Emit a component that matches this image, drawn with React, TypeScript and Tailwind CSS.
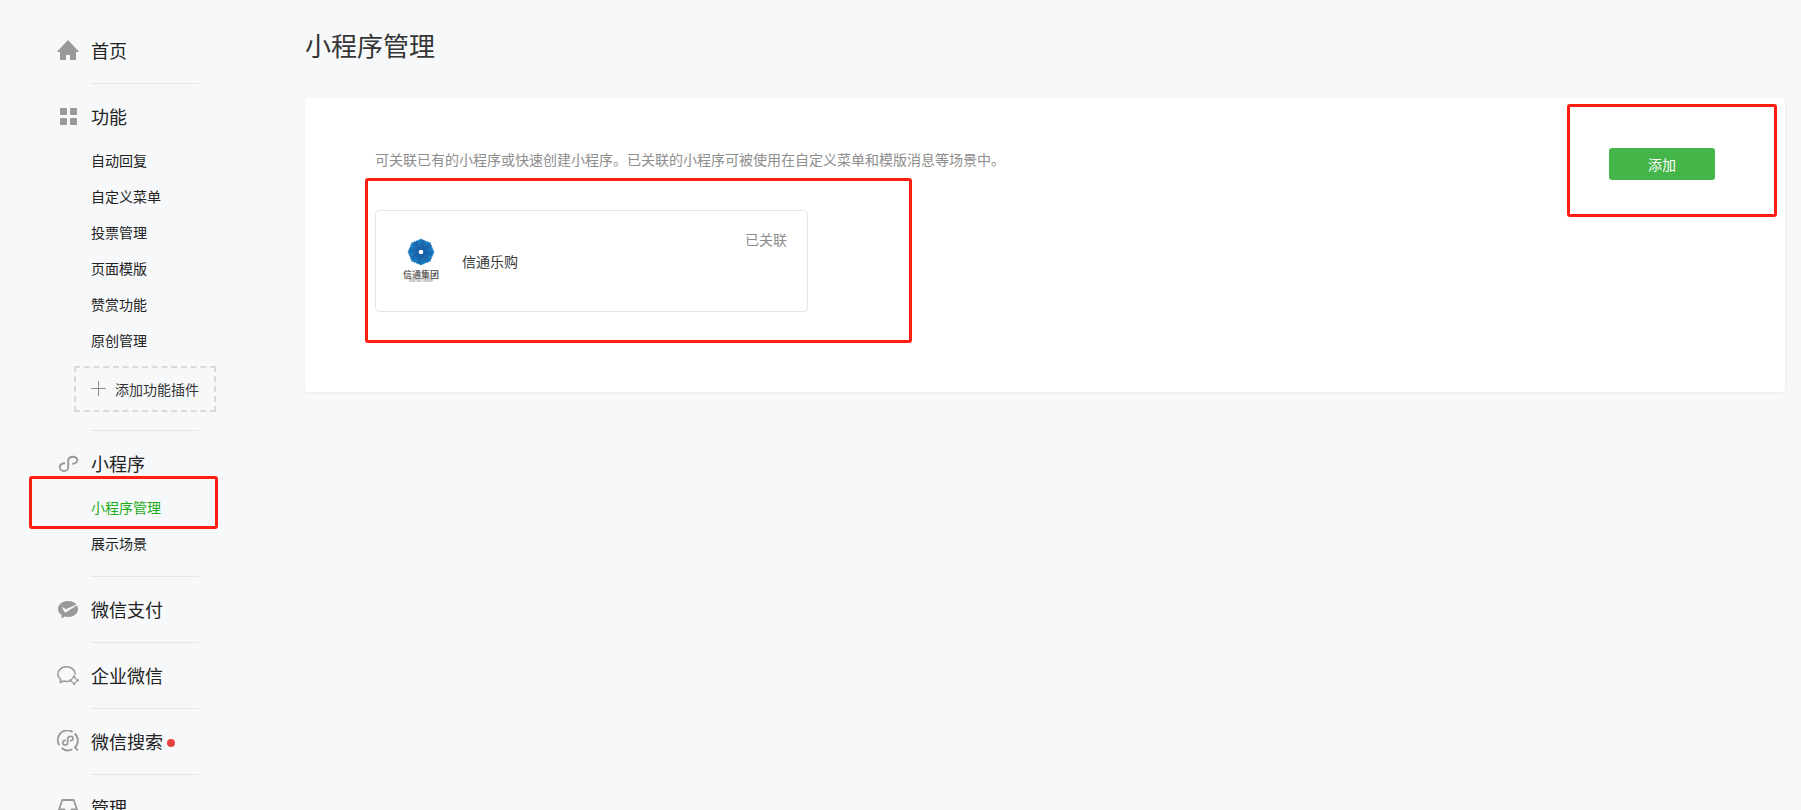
import type { ReactNode } from "react";

type Item = { label: string; active?: boolean };
type Section = {
  label: string;
  icon: ReactNode;
  items?: Item[];
  plugin?: boolean;
  dot?: boolean;
};

const Home = () => (
  <svg viewBox="0 0 22 22" className="size-[22px]" fill="#999" aria-hidden="true">
    <path d="M11 1 21.6 12.2a.4.4 0 0 1-.3.7H19v7.300a.8.8 0 0 1-.8.8H13v-5H9v5H3.800a.8.8 0 0 1-.8-.8V12.900H.7a.4.4 0 0 1-.3-.7Z" />
  </svg>
);

const Grid = () => (
  <svg viewBox="0 0 22 22" className="size-[22px]" fill="#999" aria-hidden="true">
    <rect x="3" y="3" width="7" height="7" rx="1" />
    <rect x="13" y="3" width="7" height="7" rx="1" />
    <rect x="3" y="13" width="7" height="7" rx="1" />
    <rect x="13" y="13" width="7" height="7" rx="1" />
  </svg>
);

const miniPath =
  "M7.300 10.200C4.800 10.500 2.800 12 2.800 14.200a4.200 3.800 0 0 0 8.400 0V6.800a4.700 3.900 0 0 1 9.200 0c0 2-1.700 3.600-4.400 4";

const Mini = () => (
  <svg viewBox="0 -1 22 22" className="size-[22px]" fill="none" stroke="#999" strokeWidth="1.900" strokeLinecap="round" aria-hidden="true">
    <path d={miniPath} />
  </svg>
);

const Pay = () => (
  <svg viewBox="0 -1 22 22" className="size-[22px]" aria-hidden="true">
    <path fill="#999" d="M11 2c5.600 0 10 3.500 10 8s-4.400 8-10 8c-1 0-2-.1-2.900-.4L4.300 19.600l.4-3.500C2.400 14.700 1 12.500 1 10c0-4.500 4.400-8 10-8Z" />
    <path fill="#f7f8fa" d="m5.900 8.200 2.600 1.700c.3.200.6.200.9.1l10-4.400c.5-.2.8.2.4.6l-10.600 7c-.8.5-1.500.4-1.900-.5L5.300 8.700c-.2-.4.2-.7.600-.5Z" />
  </svg>
);

const Work = () => (
  <svg viewBox="0 -1 22 22" className="size-[22px]" fill="none" stroke="#999" strokeWidth="1.600" strokeLinecap="round" strokeLinejoin="round" aria-hidden="true">
    <path d="M12 16.300c-1.700.4-3.600.3-5.300-.2L3.300 17.600l.3-3.200C1.900 13 .9 11.200.9 9.200.9 5 4.700 1.800 9.500 1.800s8.600 3.200 8.600 7.300" />
    <path d="m17 12 3.700 3.400L17 18.700l-3.600-3.300Z" strokeWidth="1.200" strokeDasharray="2.600 1.400" />
    <g fill="#999" stroke="none">
      <circle cx="17" cy="11.600" r="1.200" />
      <circle cx="20.800" cy="15.400" r="1.200" />
      <circle cx="17" cy="18.800" r="1.200" />
      <circle cx="13.200" cy="15.400" r="1.200" />
    </g>
  </svg>
);

const SearchIcon = () => (
  <svg viewBox="0 0 22 22" className="size-[22px]" fill="none" stroke="#999" strokeWidth="1.800" aria-hidden="true">
    <path d="M2.300 15.200A9.600 9.600 0 0 1 15.600 1.900" />
    <path d="M17.700 3.500a9.600 9.600 0 0 1 .2 14l3 2.900" />
    <path d="M15.400 19.200A9.600 9.600 0 0 1 4.600 18" />
    <path d={miniPath} transform="translate(4 4.200) scale(.6)" strokeWidth="2.800" strokeLinecap="round" />
  </svg>
);

const Manage = () => (
  <svg viewBox="0 -1 22 22" className="size-[22px]" fill="none" stroke="#999" strokeWidth="1.800" strokeLinejoin="round" aria-hidden="true">
    <path d="M5.300 3h11.400L20 12.500V19H2v-6.500Z" />
    <path d="M2 12.500h5.500a3.500 3 0 0 0 7 0H20" />
  </svg>
);

const sections: Section[] = [
  { label: "首页", icon: <Home /> },
  {
    label: "功能",
    icon: <Grid />,
    items: [
      { label: "自动回复" },
      { label: "自定义菜单" },
      { label: "投票管理" },
      { label: "页面模版" },
      { label: "赞赏功能" },
      { label: "原创管理" },
    ],
    plugin: true,
  },
  {
    label: "小程序",
    icon: <Mini />,
    items: [{ label: "小程序管理", active: true }, { label: "展示场景" }],
  },
  { label: "微信支付", icon: <Pay /> },
  { label: "企业微信", icon: <Work /> },
  { label: "微信搜索", icon: <SearchIcon />, dot: true },
  { label: "管理", icon: <Manage /> },
];

function Highlight({ className }: { className: string }) {
  return (
    <div
      aria-hidden="true"
      className={`pointer-events-none absolute rounded-[3px] border-3 border-[#ff1e10] ${className}`}
    />
  );
}

function NavSection({ section, last }: { section: Section; last: boolean }) {
  return (
    <li>
      <div className="pt-[11px] pb-3">
        <a href="#" className="flex h-[42px] items-center gap-3 text-lg">
          {section.icon}
          <span>{section.label}</span>
          {section.dot && <span className="mt-1 -ml-2 size-2 rounded-full bg-[#e64340]" />}
        </a>
        {section.items && (
          <ul className="pt-[5px] pb-[3px] pl-[34px]">
            {section.items.map((item) => (
              <li key={item.label} className="relative">
                <a
                  href="#"
                  className={`block text-sm leading-9 ${item.active ? "text-[#1aad19]" : ""}`}
                >
                  {item.label}
                </a>
                {item.active && <Highlight className="-top-[13px] -left-[62px] h-[53px] w-[189px]" />}
              </li>
            ))}
          </ul>
        )}
        {section.plugin && (
          <button
            type="button"
            className="mt-[5px] mb-[6px] ml-[17px] flex h-[46px] w-[142px] items-center gap-2 border-2 border-dashed border-[#d9dadc] pl-[15px] text-sm text-[#353535]"
          >
            <svg viewBox="0 0 16 16" className="size-4" stroke="#8d8d8d" aria-hidden="true">
              <path d="M0 7.500h15M7.500 0v15" />
            </svg>
            添加功能插件
          </button>
        )}
      </div>
      {!last && <div className="ml-[34px] h-px w-[108px] bg-[#e4e6e9]" />}
    </li>
  );
}

function Logo() {
  return (
    <svg viewBox="0 0 44 52" className="h-[52px] w-11" role="img" aria-label="信通集团">
      <defs>
        <linearGradient id="petal" x1="0" y1="0" x2="1" y2="1">
          <stop offset="0" stopColor="#1c8bcb" />
          <stop offset="1" stopColor="#174c99" />
        </linearGradient>
      </defs>
      <circle cx="22" cy="17" r="10.500" fill="#175ca6" />
      {[0, 45, 90, 135, 180, 225, 270, 315].map((angle) => (
        <path
          key={angle}
          d="M22 15 17 7V5.800h1.600V4.700h1.800L22 3.500l1.600 1.200h1.800v1.100H27V7Z"
          transform={`rotate(${angle} 22 17)`}
          fill="url(#petal)"
        />
      ))}
      <circle cx="22" cy="17" r="2.300" fill="#fff" />
      <text x="22" y="43" textAnchor="middle" fontSize="9" fontWeight="700" fill="#666">
        信通集团
      </text>
      <text x="22" y="47" textAnchor="middle" fontSize="3" fill="#555">
        XINTONG GROUP
      </text>
    </svg>
  );
}

export default function App() {
  return (
    <div className="flex h-screen overflow-hidden bg-[#f7f8fa] font-['Noto_Sans_CJK_SC',sans-serif] text-[#222]">
      <nav aria-label="主菜单" className="w-[305px] shrink-0 pt-[18px] pl-[57px]">
        <ul>
          {sections.map((section, i) => (
            <NavSection key={section.label} section={section} last={i === sections.length - 1} />
          ))}
        </ul>
      </nav>

      <main className="min-w-0 flex-1 pt-[23px] pr-4">
        <h1 className="text-[26px] leading-[44px] text-[#353535]">小程序管理</h1>

        <section className="mt-[31px] flex items-start justify-between rounded-[3px] bg-white pt-[50px] pr-[70px] pb-20 pl-[70px] shadow-[0_1px_3px_rgba(0,0,0,0.06)]">
          <div>
            <p className="text-sm leading-[22px] text-[#8d8d8d]">
              可关联已有的小程序或快速创建小程序。已关联的小程序可被使用在自定义菜单和模版消息等场景中。
            </p>
            <div className="relative mt-10 flex h-[102px] w-[433px] items-center rounded-[4px] border border-[#e4e6e9] px-5 text-sm">
              <div className="flex flex-1 items-center gap-[19px] pl-[3px]">
                <Logo />
                <span className="text-[#353535]">信通乐购</span>
              </div>
              <span className="self-start pt-[18px] text-[#8d8d8d]">已关联</span>
              <Highlight className="-top-[33px] -left-[11px] h-[165px] w-[547px]" />
            </div>
          </div>
          <div className="relative">
            <button type="button" className="block h-8 w-[106px] rounded-[3px] bg-[#44b549] text-sm text-white">
              添加
            </button>
            <Highlight className="-top-11 -left-[42px] h-[113px] w-[210px]" />
          </div>
        </section>
      </main>
    </div>
  );
}
